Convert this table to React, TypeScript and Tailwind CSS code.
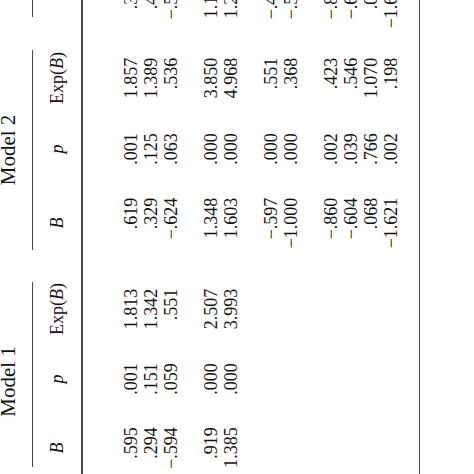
const COLS = [
  { w: "w-[52px]", head: "B" },
  { w: "w-[86px]", head: "p" },
  { w: "w-[54px]", head: "Exp" },
  { w: "w-[16px]", head: "" },
  { w: "w-[86px]", head: "B" },
  { w: "w-[62px]", head: "p" },
  { w: "w-[80px]", head: "Exp" },
  { w: "w-[70px]", head: "B" },
]

// one array per column, "" = empty line (group gap)
const DATA: string[][] = [
  [".595", ".294", "\u2212.594", "", ".919", "1.385"],
  [".001", ".151", ".059", "", ".000", ".000"],
  ["1.813", "1.342", ".551", "", "2.507", "3.993"],
  [],
  [".619", ".329", "\u2212.624", "", "1.348", "1.603", "", "\u2212.597", "\u22121.000", "", "\u2212.860", "\u2212.604", ".068", "\u22121.621"],
  [".001", ".125", ".063", "", ".000", ".000", "", ".000", ".000", "", ".002", ".039", ".766", ".002"],
  ["1.857", "1.389", ".536", "", "3.850", "4.968", "", ".551", ".368", "", ".423", ".546", "1.070", ".198"],
  [".312", ".409", "\u2212.587", "", "1.124", "1.236", "", "\u2212.463", "\u2212.512", "", "\u2212.843", "\u2212.617", ".047", "\u22121.658"],
]

function Head({ h }: { h: string }) {
  if (h === "Exp") return <span>Exp(<i>B</i>)</span>
  if (h === "") return null
  return <i>{h}</i>
}

function Rule() {
  return <div className="h-[1.5px] w-full shrink-0 bg-[#4a4a4a]" />
}

export default function App() {
  return (
    <div className="w-[474px] h-[474px] overflow-hidden bg-white text-[#111]" style={{ fontFamily: '"Liberation Serif", "Times New Roman", serif' }}>
      <div className="w-[474px] h-[474px] -rotate-90 flex flex-col">
        {/* model spanners */}
        <div className="flex h-[33px] shrink-0 text-[21px]">
          <div className="ml-[7px] w-[185px] shrink-0 flex flex-col justify-between">
            <div className="text-center leading-[20px] -mt-[2px] pr-[14px] whitespace-nowrap">Model 1</div>
            <div className="h-[1.5px] bg-[#4a4a4a]" />
          </div>
          <div className="ml-[32px] w-[200px] shrink-0 flex flex-col justify-between">
            <div className="text-center leading-[20px] -mt-[2px] whitespace-nowrap">Model 2</div>
            <div className="h-[1.5px] bg-[#4a4a4a]" />
          </div>
          <div className="ml-[33px] w-[200px] shrink-0 flex flex-col justify-between">
            <div className="text-center leading-[20px] -mt-[2px] whitespace-nowrap">Model 3</div>
            <div className="h-[1.5px] bg-[#4a4a4a]" />
          </div>
        </div>

        {/* column heads */}
        <div className="flex h-[48px] shrink-0 pt-[14px] text-[18px]">
          {COLS.map((c, i) => (
            <div key={i} className={`${c.w} shrink-0 text-center leading-[20px] whitespace-nowrap ${i === 7 ? "pl-[40px]" : ""}`}>
              <Head h={c.head} />
            </div>
          ))}
        </div>
        <Rule />

        {/* body */}
        <div className="flex h-[336px] shrink-0 pt-[38px] text-[18px]">
          {COLS.map((c, i) => (
            <div key={i} className={`${c.w} shrink-0 flex flex-col items-center`}>
              <div className="text-right leading-[20px]">
                {DATA[i].map((v, j) => (
                  <div key={j} className="h-[20px] whitespace-nowrap">{v}</div>
                ))}
              </div>
            </div>
          ))}
        </div>
        <Rule />
      </div>
    </div>
  )
}
